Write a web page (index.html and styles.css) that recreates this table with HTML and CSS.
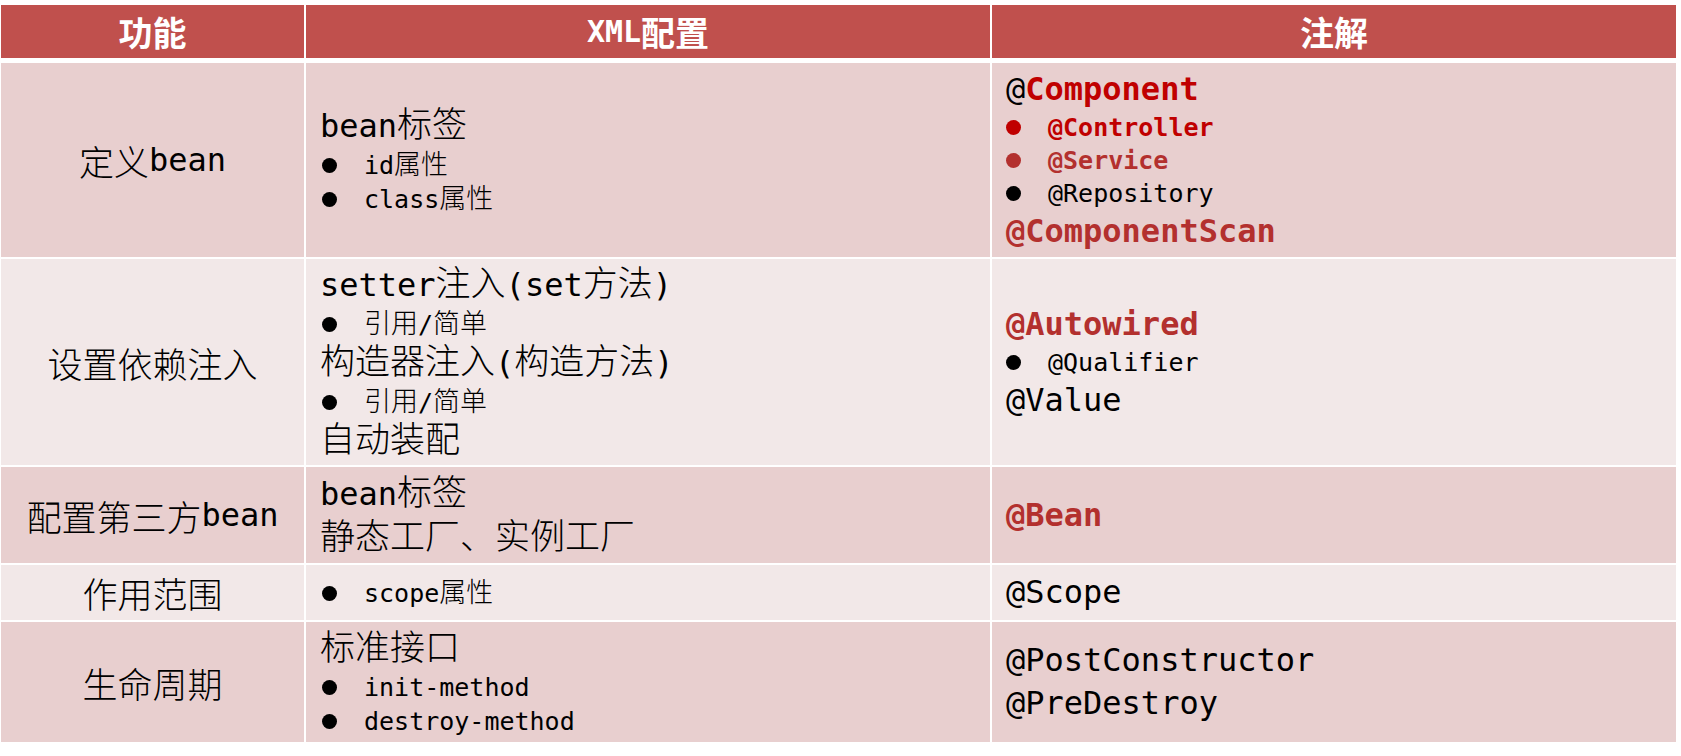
FILE: index.html
```html
<!DOCTYPE html>
<html lang="zh-CN">
<head>
<meta charset="utf-8">
<title>Spring 配置对照</title>
<link rel="stylesheet" href="styles.css">
</head>
<body>
<div class="tbl">
  <div class="row head">
    <div class="cell">功能</div>
    <div class="cell"><span class="m">XML</span>配置</div>
    <div class="cell">注解</div>
  </div>

  <div class="row r1 band">
    <div class="cell c1">定义<span class="m">bean</span></div>
    <div class="cell c2">
      <div class="ln big"><span class="m">bean</span>标签</div>
      <div class="ln sm bul"><span class="m">id</span>属性</div>
      <div class="ln sm bul"><span class="m">class</span>属性</div>
    </div>
    <div class="cell c3">
      <div class="ln big">@<b class="red">Component</b></div>
      <div class="ln sm bul red"><b>@Controller</b></div>
      <div class="ln sm bul brick"><b>@Service</b></div>
      <div class="ln sm bul">@Repository</div>
      <div class="ln big brick"><b>@ComponentScan</b></div>
    </div>
  </div>

  <div class="row r2 plain">
    <div class="cell c1">设置依赖注入</div>
    <div class="cell c2">
      <div class="ln big"><span class="m">setter</span>注入<span class="m">(set</span>方法<span class="m">)</span></div>
      <div class="ln sm bul">引用<span class="m">/</span>简单</div>
      <div class="ln big">构造器注入<span class="m">(</span>构造方法<span class="m">)</span></div>
      <div class="ln sm bul">引用<span class="m">/</span>简单</div>
      <div class="ln big">自动装配</div>
    </div>
    <div class="cell c3">
      <div class="ln big brick"><b>@Autowired</b></div>
      <div class="ln sm bul">@Qualifier</div>
      <div class="ln big">@Value</div>
    </div>
  </div>

  <div class="row r3 band">
    <div class="cell c1">配置第三方<span class="m">bean</span></div>
    <div class="cell c2">
      <div class="ln big"><span class="m">bean</span>标签</div>
      <div class="ln big">静态工厂、实例工厂</div>
    </div>
    <div class="cell c3">
      <div class="ln big brick"><b>@Bean</b></div>
    </div>
  </div>

  <div class="row r4 plain">
    <div class="cell c1">作用范围</div>
    <div class="cell c2">
      <div class="ln sm bul"><span class="m">scope</span>属性</div>
    </div>
    <div class="cell c3">
      <div class="ln big">@Scope</div>
    </div>
  </div>

  <div class="row r5 band">
    <div class="cell c1">生命周期</div>
    <div class="cell c2">
      <div class="ln big">标准接口</div>
      <div class="ln sm bul"><span class="m">init-method</span></div>
      <div class="ln sm bul"><span class="m">destroy-method</span></div>
    </div>
    <div class="cell c3">
      <div class="ln big">@PostConstructor</div>
      <div class="ln big">@PreDestroy</div>
    </div>
  </div>
</div>
</body>
</html>
```
FILE: styles.css
```css
html, body {
  margin: 0;
  padding: 0;
  background: #ffffff;
}

.tbl {
  display: flex;
  flex-direction: column;
  gap: 2px;
  width: 1675px;
  margin: 5px 0 0 1px;
  font-family: "DejaVu Sans Mono", "Noto Sans CJK SC", monospace;
  color: #000000;
}

.row {
  display: grid;
  grid-template-columns: 303px 684px 684px;
  column-gap: 2px;
}

.head {
  height: 53px;
  margin-bottom: 3px;
}

.head .cell {
  background: #c0504d;
  color: #ffffff;
  font-weight: bold;
  font-size: 34px;
  flex-direction: row;
  align-items: center;
  justify-content: center;
}

.head .m {
  font-size: 30px;
}

.r1 { height: 194px; }
.r2 { height: 206px; }
.r3 { height: 96px; }
.r4 { height: 55px; }
.r5 { height: 120px; }

.band .cell { background: #e8cfcf; }
.plain .cell { background: #f2e8e8; }

.cell {
  display: flex;
  flex-direction: column;
  justify-content: center;
  min-width: 0;
}

.c1 {
  flex-direction: row;
  align-items: center;
  justify-content: center;
  font-size: 35px;
  font-weight: 300;
}

.c1 .m { font-size: 32px; }

.c2 {
  padding-left: 14px;
  font-weight: 300;
}

.c2 .m { font-weight: normal; }

.c3 {
  padding-left: 14px;
}

.ln {
  white-space: nowrap;
}

.big {
  font-size: 35px;
  line-height: 43px;
}

.big .m { font-size: 32px; }

.sm {
  font-size: 27px;
  line-height: 33px;
}

.sm .m { font-size: 25px; }

.c3 .big { font-size: 32px; }
.c3 .sm { font-size: 25px; }

.bul::before {
  content: "";
  display: inline-block;
  width: 15px;
  height: 15px;
  border-radius: 50%;
  background: currentColor;
  margin: 0 27px 1px 2px;
}

.c3 .bul::before {
  margin-left: 0;
}

.red { color: #c00000; }
.brick { color: #b3302e; }
```
